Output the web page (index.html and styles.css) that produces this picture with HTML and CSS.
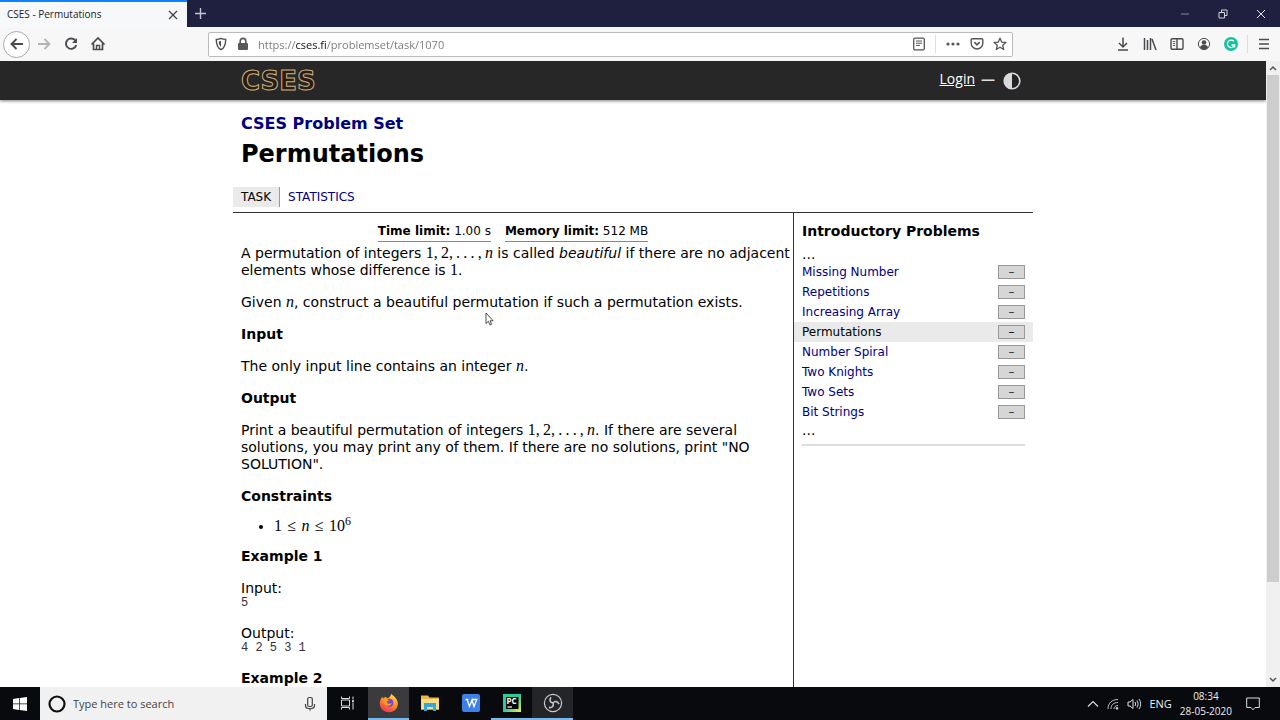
FILE: index.html
```html
<!DOCTYPE html>
<html lang="en">
<head>
    <meta charset="UTF-8">
    <meta name="viewport" content="width=device-width, initial-scale=1.0">
    <title>CSES - Permutations</title>
    <link rel="stylesheet" href="styles.css">
</head>
<body>
    <!-- Browser tabs -->
    <div class="tab-bar">
        <div class="tab">
            <span>CSES - Permutations</span>
            <button aria-label="Close tab"><svg width="10" height="10" viewBox="0 0 10 10"><path d="M1 1l8 8M9 1l-8 8" stroke="#444" stroke-width="1.3"/></svg></button>
        </div>
        <button class="new-tab" aria-label="New tab"><svg width="13" height="13" viewBox="0 0 13 13"><path d="M6.500 1v11M1 6.500h11" stroke="#c4c4d4" stroke-width="1.400"/></svg></button>
        <div class="window-buttons">
            <button aria-label="Minimize"><svg width="10" height="10" viewBox="0 0 10 10"><path d="M1 5h8" stroke="#8a8a9c"/></svg></button>
            <button aria-label="Restore"><svg width="10" height="10" viewBox="0 0 10 10" fill="none" stroke="#d5d5e0"><path d="M1 3.500h5.500v5.500H1zM3.500 3.500V1H9v5.500H6.500"/></svg></button>
            <button aria-label="Close"><svg width="10" height="10" viewBox="0 0 10 10"><path d="M1 1l8 8M9 1L1 9" stroke="#e5e5ee"/></svg></button>
        </div>
    </div>

    <!-- Browser toolbar -->
    <div class="toolbar">
        <div class="nav-buttons">
            <button class="back" aria-label="Back"><svg width="16" height="16" viewBox="0 0 16 16" fill="none" stroke="#4a4a4f" stroke-width="1.900"><path d="M14 8H3M7.500 3L2.500 8l5 5"/></svg></button>
            <button aria-label="Forward"><svg width="16" height="16" viewBox="0 0 16 16" fill="none" stroke="#b5b5b8" stroke-width="1.800"><path d="M2 8h11M8.500 3l5 5-5 5"/></svg></button>
            <button aria-label="Reload"><svg width="16" height="16" viewBox="0 0 16 16" fill="none" stroke="#4a4a4f" stroke-width="1.900"><path d="M12.500 4.800A5.200 5.200 0 1 0 13.200 9"/><path d="M14 2v5H9z" fill="#4a4a4f" stroke="none"/></svg></button>
            <button aria-label="Home"><svg width="16" height="16" viewBox="0 0 16 16" fill="none" stroke="#4a4a4f" stroke-width="1.700"><path d="M1.500 8.500L8 2l6.500 6.500M3.500 7.500v6h9v-6"/><path d="M6.500 13V9.500h3V13" stroke-width="1.400"/></svg></button>
        </div>
        <div class="url-box">
            <svg width="14" height="14" viewBox="0 0 14 14" fill="none" stroke="#4a4a4f" stroke-width="1.400"><path d="M7 1.300c1.700.9 3 1 4.700 1.100 0 4.700-.8 8.200-4.700 10.300C3.100 10.600 2.300 7.100 2.300 2.400 4 2.300 5.300 2.200 7 1.300z"/><path d="M7 4v6C5.300 8.600 4.900 7 4.800 4.600z" fill="#4a4a4f" stroke="none"/></svg>
            <svg class="lock" width="12" height="14" viewBox="0 0 12 14"><path d="M3.200 6.500V4.200a2.800 2.800 0 0 1 5.600 0v2.300" fill="none" stroke="#58585c" stroke-width="1.700"/><rect x="1" y="6" width="10" height="7" rx="1" fill="#58585c"/></svg>
            <input type="text" aria-label="Address" value="https://cses.fi/problemset/task/1070">
            <button aria-label="Reader view"><svg width="14" height="14" viewBox="0 0 14 14" fill="none" stroke="#55555a" stroke-width="1.300"><rect x="1.700" y="1.200" width="10.600" height="11.600" rx="1.300"/><path d="M4 4h6M4 6.200h6M4 8.400h4" stroke-width="1"/></svg></button>
            <span class="divider"></span>
            <button aria-label="Page actions"><svg width="16" height="14" viewBox="0 0 16 14" fill="#55555a"><circle cx="3" cy="7" r="1.600"/><circle cx="8" cy="7" r="1.600"/><circle cx="13" cy="7" r="1.600"/></svg></button>
            <button aria-label="Save to Pocket"><svg width="14" height="14" viewBox="0 0 14 14" fill="none" stroke="#55555a" stroke-width="1.400"><path d="M2.200 1.800h9.600q1 0 1 1v3.400a5.800 5.800 0 0 1-11.600 0V2.800q0-1 1-1z"/><path d="M4.300 5.200L7 7.800l2.700-2.600" stroke-width="1.600"/></svg></button>
            <button aria-label="Bookmark"><svg width="14" height="14" viewBox="0 0 14 14" fill="none" stroke="#55555a" stroke-width="1.300" stroke-linejoin="round"><path d="M7 1.200l1.700 3.900 4.200.4-3.200 2.800 1 4.200L7 10.300l-3.700 2.200 1-4.200L1.100 5.500l4.200-.4z"/></svg></button>
        </div>
        <div class="tool-buttons">
            <button aria-label="Downloads"><svg width="14" height="14" viewBox="0 0 14 14" fill="none" stroke="#4a4a4f" stroke-width="1.500"><path d="M7 .5v9M3 6l4 4 4-4M2 13h10"/></svg></button>
            <button aria-label="Library"><svg width="14" height="14" viewBox="0 0 14 14" stroke="#4a4a4f" stroke-width="1.500"><path d="M1.500 1v12M4.500 3v10M7.500 1v12M9 2l4 11"/></svg></button>
            <button aria-label="Sidebars"><svg width="14" height="14" viewBox="0 0 14 14" fill="none" stroke="#4a4a4f" stroke-width="1.400"><rect x="1" y="1.700" width="12" height="10.600" rx="1.300"/><path d="M7 2v10"/><path d="M2.800 4.500h2.400M2.800 6.500h2.400M2.800 8.500h2.400" stroke-width=".9"/></svg></button>
            <button aria-label="Account"><svg width="14" height="14" viewBox="0 0 14 14"><circle cx="7" cy="7" r="5.600" fill="none" stroke="#4a4a4f"/><circle cx="7" cy="5.500" r="2.300" fill="#4a4a4f"/><path d="M3 10.500c.3-2 2-2.500 4-2.500s3.700.5 4 2.500A5 5 0 0 1 3 10.500z" fill="#4a4a4f"/></svg></button>
            <button aria-label="Grammar check"><svg width="14" height="14" viewBox="0 0 14 14"><circle cx="7" cy="7" r="7" fill="#15c39a"/><path d="M9.800 4.300A3.700 3.700 0 1 0 10.600 8M7.500 8h3.100v2.500" fill="none" stroke="#fff" stroke-width="1.300"/></svg></button>
            <span class="divider"></span>
            <button aria-label="Menu"><svg width="14" height="14" viewBox="0 0 14 14" stroke="#4a4a4f" stroke-width="1.500"><path d="M2 2.500h10M2 7h10M2 11.500h10"/></svg></button>
        </div>
    </div>

    <div class="viewport">
        <div class="page">
            <header class="header">
                <div class="header-inner">
                    <a class="logo" href="#">CSES</a>
                    <div class="controls">
                        <a href="#">Login</a>
                        <span>—</span>
                        <button aria-label="Dark mode"><svg width="18" height="18" viewBox="0 0 18 18"><circle cx="9" cy="9" r="7.800" fill="#222" stroke="#d8dadd" stroke-width="1.600"/><path d="M9 1a8 8 0 0 0 0 16z" fill="#d8dadd"/></svg></button>
                    </div>
                </div>
            </header>

            <div class="container">
                <div class="title-block">
                    <h3><a href="#">CSES Problem Set</a></h3>
                    <h1>Permutations</h1>
                    <ul class="nav">
                        <li class="current"><a href="#">TASK</a></li>
                        <li><a href="#">STATISTICS</a></li>
                    </ul>
                </div>
                <div class="content-wrapper">
                    <main class="content">
                        <ul class="limits">
                            <li><b>Time limit:</b> 1.00 s</li>
                            <li><b>Memory limit:</b> 512 MB</li>
                        </ul>
                        <p>A permutation of integers <span class="math">1,&thinsp;2,&thinsp;.&thinsp;.&thinsp;.&thinsp;,&thinsp;<i>n</i></span> is called <em>beautiful</em> if there are no adjacent elements whose difference is <span class="math">1</span>.</p>
                        <p>Given <span class="math"><i>n</i></span>, construct a beautiful permutation if such a permutation exists.</p>
                        <h4>Input</h4>
                        <p>The only input line contains an integer <span class="math"><i>n</i></span>.</p>
                        <h4>Output</h4>
                        <p>Print a beautiful permutation of integers <span class="math">1,&thinsp;2,&thinsp;.&thinsp;.&thinsp;.&thinsp;,&thinsp;<i>n</i></span>. If there are several solutions, you may print any of them. If there are no solutions, print "NO SOLUTION".</p>
                        <h4>Constraints</h4>
                        <ul class="constraints">
                            <li><span class="math">1&emsp13;≤&emsp13;<i>n</i>&emsp13;≤&emsp13;10<sup>6</sup></span></li>
                        </ul>
                        <h4>Example 1</h4>
                        <p>Input:</p>
                        <pre>5</pre>
                        <p>Output:</p>
                        <pre>4 2 5 3 1</pre>
                        <h4>Example 2</h4>
                    </main>
                    <aside class="sidebar">
                        <h4>Introductory Problems</h4>
                        <div class="dots">...</div>
                        <ul>
                            <li><a href="#">Missing Number</a><a class="score" href="#">–</a></li>
                            <li><a href="#">Repetitions</a><a class="score" href="#">–</a></li>
                            <li><a href="#">Increasing Array</a><a class="score" href="#">–</a></li>
                            <li class="current"><a href="#">Permutations</a><a class="score" href="#">–</a></li>
                            <li><a href="#">Number Spiral</a><a class="score" href="#">–</a></li>
                            <li><a href="#">Two Knights</a><a class="score" href="#">–</a></li>
                            <li><a href="#">Two Sets</a><a class="score" href="#">–</a></li>
                            <li><a href="#">Bit Strings</a><a class="score" href="#">–</a></li>
                        </ul>
                        <div class="dots">...</div>
                        <hr>
                    </aside>
                </div>
            </div>
        </div>
        <div class="scrollbar">
            <svg width="14" height="14" viewBox="0 0 14 14"><path d="M4 9l3-3 3 3" fill="none" stroke="#555" stroke-width="1.500"/></svg>
            <div class="thumb"></div>
            <svg width="14" height="14" viewBox="0 0 14 14"><path d="M4 5l3 3 3-3" fill="none" stroke="#555" stroke-width="1.500"/></svg>
        </div>
        <svg class="cursor" width="9" height="14" viewBox="0 0 9 14"><path d="M1 1v10.500l2.400-2.200 1.600 3.700 1.600-.7L5 8.800h3.200z" fill="#fff" stroke="#222" stroke-width=".8"/></svg>
    </div>

    <!-- Windows taskbar -->
    <div class="taskbar">
        <button class="start" aria-label="Start"><svg width="14" height="14" viewBox="0 0 14 14" fill="#fff"><path d="M0 2l6-.9v5.500H0zM6.700 1L14 0v6.600H6.700zM0 7.300h6v5.600L0 12zM6.700 7.300H14V14l-7.300-1z"/></svg></button>
        <div class="search">
            <svg width="18" height="18" viewBox="0 0 18 18"><circle cx="9" cy="9" r="7.500" fill="none" stroke="#111" stroke-width="2.200"/></svg>
            <input type="text" aria-label="Search" placeholder="Type here to search">
            <svg width="12" height="16" viewBox="0 0 12 16" fill="none" stroke="#444" stroke-width="1.200"><rect x="3.700" y="1.500" width="4.600" height="9" rx="1.500"/><path d="M1.500 8v1.500q0 3 3 3h3q3 0 3-3V8M6 12.500v2.200"/></svg>
        </div>
        <button class="app" aria-label="Task view"><svg width="16" height="16" viewBox="0 0 16 16" fill="none" stroke="#ddd"><path d="M1.500 5h8v6h-8zM1.500 1.500v2h8v-2M1.500 14.500v-2h8v2M13 1.500v3M13 8v6.500"/><path d="M12 6.200h2" stroke-width="2"/></svg></button>
        <button class="app active" aria-label="Firefox"><svg width="20" height="20" viewBox="0 0 20 20"><defs><linearGradient id="fox" x1=".8" y1="0" x2=".3" y2="1"><stop offset="0" stop-color="#ffe14a"/><stop offset=".5" stop-color="#ff8a1e"/><stop offset="1" stop-color="#f2335c"/></linearGradient></defs><path d="M12.500.8c1 2 4.500 3 6 7.500 1.600 5.800-2.400 11-8.300 11S.8 15 .8 10.500C.8 7.500 2 5.500 3.400 3.800l.5 1.800C5 4.500 6 4 7.300 4L8 5.500c2-.5 3.400-2 4.500-4.700z" fill="url(#fox)"/><circle cx="10.300" cy="9.800" r="4" fill="#7046df"/><path d="M5 6c2-.8 4 0 5.500 1.800-1.500 0-2.500.5-2.800 1.700 1.800 1.800 3.500 1.200 5 .5-.5 3.500-6.500 4-8 0C4 8.500 4.200 7 5 6z" fill="#ff9a22"/></svg></button>
        <button class="app" aria-label="File Explorer"><svg width="20" height="18" viewBox="0 0 20 18"><path d="M1 1.500h7l1.500 2H19v12H1z" fill="#e8b64a"/><path d="M1 5h18v10.500H1z" fill="#fbdc86"/><path d="M4 17V9h12v8h-3v-4H7v4z" fill="#3aa6d8"/></svg></button>
        <button class="app" aria-label="WPS Writer"><svg width="18" height="18" viewBox="0 0 18 18"><rect width="18" height="18" rx="2" fill="#3c80e8"/><path d="M3.500 5.500h3M5 5.500l2.500 7L10 6l2 6.500 2.800-7H9.500" fill="none" stroke="#fff" stroke-width="1.300"/></svg></button>
        <button class="app open" aria-label="PyCharm"><svg width="18" height="18" viewBox="0 0 18 18"><defs><linearGradient id="pc" x1="0" y1="0" x2="1" y2="1"><stop offset="0" stop-color="#21d789"/><stop offset=".5" stop-color="#2ec7a0"/><stop offset="1" stop-color="#f5ee50"/></linearGradient></defs><rect width="18" height="18" fill="url(#pc)"/><rect x="3" y="3" width="12.500" height="12" fill="#080808"/><text class="pc-text" x="3.500" y="10">PC</text><path d="M4.500 13h4.500" stroke="#fff" stroke-width="1.200"/></svg></button>
        <button class="app open dim" aria-label="OBS Studio"><svg width="20" height="20" viewBox="0 0 20 20" fill="none" stroke="#c8c8cc"><circle cx="10" cy="10" r="8.600" stroke-width="1.200"/><path d="M10 10c-3-.5-4-3-2-5.800" stroke-width="1.600"/><path d="M10 10c-3-.5-4-3-2-5.800" stroke-width="1.600" transform="rotate(120 10 10)"/><path d="M10 10c-3-.5-4-3-2-5.800" stroke-width="1.600" transform="rotate(240 10 10)"/></svg></button>
        <div class="tray">
            <svg width="12" height="12" viewBox="0 0 12 12"><path d="M1 8.500l5-5 5 5" fill="none" stroke="#ddd" stroke-width="1.200"/></svg>
            <svg width="12" height="12" viewBox="0 0 12 12" fill="none" stroke="#bbb"><path d="M1 11C1 5 5 1.500 11 1.500M4 11c0-4 2.500-6.500 7-6.500M7 11c0-2 1.500-3.500 4-3.500"/><circle cx="10" cy="10.300" r="1" fill="#ddd"/></svg>
            <svg width="14" height="12" viewBox="0 0 14 12" fill="none" stroke="#ddd"><path d="M1 4h2l3-2.500v9L3 8H1zM8 4q1.500 2 0 4M10 2.500q2.500 3.500 0 7M12 1q3.500 5 0 10"/></svg>
            <span>ENG</span>
            <div class="clock">08:34<br>28-05-2020</div>
            <svg class="notify" width="14" height="14" viewBox="0 0 14 14" fill="none" stroke="#ddd"><path d="M.7 1h12.600v9.500H9L7 12.800 5 10.500H.7z"/></svg>
        </div>
    </div>
</body>
</html>
```
FILE: styles.css
```css
* {
    box-sizing: border-box;
}

body {
    margin: 0;
    height: 100vh;
    display: flex;
    flex-direction: column;
    overflow: hidden;
    font-family: "DejaVu Sans", Verdana, sans-serif;
    font-size: 14px;
    line-height: 17px;
    color: #000;
    background: #fff;
}

button {
    display: flex;
    align-items: center;
    justify-content: center;
    padding: 0;
    border: none;
    background: none;
}

svg {
    display: block;
    flex-shrink: 0;
}

ul {
    list-style: none;
    margin: 0;
    padding: 0;
}

a {
    color: #000080;
    text-decoration: none;
}

/* browser */
.tab-bar {
    display: flex;
    height: 27px;
    background: #1f1f40;
    font-family: "Open Sans", sans-serif;
    font-size: 10px;
}

.tab {
    display: flex;
    align-items: center;
    justify-content: space-between;
    width: 187px;
    padding: 0 9px 0 7px;
    border-top: 2px solid #0a84ff;
    background: #f7f8fa;
    color: #222;
}

.new-tab {
    width: 27px;
}

.window-buttons {
    display: flex;
    margin-left: auto;
}

.window-buttons button {
    width: 38px;
}

.toolbar {
    display: flex;
    align-items: center;
    height: 34px;
    padding: 0 9px 0 3px;
    background: #f7f7f8;
}

.nav-buttons {
    display: flex;
    align-items: center;
    width: 205px;
}

.nav-buttons button {
    width: 27px;
    height: 27px;
}

.nav-buttons .back {
    border: 1px solid #aaa;
    border-radius: 50%;
    background: #fff;
}

.url-box {
    display: flex;
    align-items: center;
    gap: 9px;
    flex: 1;
    height: 25px;
    padding: 0 5px;
    border: 1px solid #bbb;
    border-radius: 2px;
    background: #fff;
}

.url-box input {
    flex: 1;
    min-width: 0;
    padding: 0;
    border: none;
    outline: none;
    font-family: "Open Sans", sans-serif;
    font-size: 11px;
    color: transparent;
    background: linear-gradient(to right, #777 38px, #111 38px, #111 68px, #777 68px);
    -webkit-background-clip: text;
    background-clip: text;
}

.divider {
    width: 1px;
    height: 18px;
    background: #ddd;
}

.tool-buttons {
    display: flex;
    align-items: center;
    gap: 13px;
    padding-left: 103px;
}

.tool-buttons .divider {
    margin: 0 -4px;
}

.viewport {
    position: relative;
    display: flex;
    flex: 1;
    min-height: 0;
}

.page {
    flex: 1;
    overflow: hidden;
}

.scrollbar {
    display: flex;
    flex-direction: column;
    width: 14px;
    background: #f0f0f0;
}

.thumb {
    height: 81%;
    margin: 0 1px auto;
    background: #cdcdcd;
}

.cursor {
    position: absolute;
    left: 485px;
    top: 251px;
}

/* site header */
.header {
    height: 39px;
    background: #272727;
    box-shadow: 0 1px 3px rgba(0, 0, 0, 0.5);
}

.header-inner {
    display: flex;
    align-items: center;
    justify-content: space-between;
    max-width: 800px;
    height: 100%;
    margin: 0 auto;
    padding: 0 12px 0 8px;
}

.logo {
    font-size: 26px;
    font-weight: bold;
    line-height: 26px;
    color: #2c1c10;
    -webkit-text-stroke: 1px #c9b083;
}

.controls {
    display: flex;
    align-items: center;
    gap: 6px;
    font-family: "Open Sans", sans-serif;
    color: #ddd;
}

.controls a,
.controls span {
    padding-bottom: 4px;
}

.controls a {
    color: #fff;
    text-decoration: underline;
}

.controls span {
    font-weight: bold;
}

.controls button {
    margin-left: 2px;
}

/* task page */
.container {
    max-width: 800px;
    margin: 0 auto;
}

.title-block {
    padding-top: 15px;
    border-bottom: 1px solid #333;
}

.title-block h3 {
    margin: 0;
    padding: 0 8px;
    font-size: 16px;
    line-height: 18px;
}

.title-block h1 {
    margin: 6px 0 18px;
    padding: 0 8px;
    font-size: 24px;
    line-height: 30px;
}

.nav {
    display: flex;
    padding-bottom: 5px;
    font-size: 12px;
    line-height: 16px;
}

.nav li {
    padding: 2px 8px;
}

.nav .current {
    background: #eaeaea;
    border-right: 1px solid #999;
}

.current a {
    color: #000;
}

.content-wrapper {
    display: flex;
}

.content {
    flex: 1;
    padding: 10px 0 10px 8px;
}

.content p,
.content h4 {
    margin: 0 0 15px;
    font-size: 14px;
}

.limits {
    display: flex;
    justify-content: center;
    gap: 14px;
    margin: 0 8px 3px 0;
    font-size: 12px;
    line-height: 16px;
}

.limits li {
    padding-bottom: 2px;
    border-bottom: 1px solid #888;
}

/* formulas must not stretch the text lines */
.math {
    font-family: "Liberation Serif", serif;
    font-size: 16px;
    line-height: 0;
    white-space: nowrap;
}

.math sup {
    font-size: 12px;
}

.constraints {
    list-style: disc;
    margin: -2px 0 13px;
    padding-left: 33px;
}

.content pre {
    margin: -15px 0 15px;
    font-family: "Liberation Mono", monospace;
    font-size: 12px;
    line-height: 13px;
    color: #333;
}

.sidebar {
    width: 240px;
    min-height: 480px;
    padding-top: 10px;
    border-left: 1px solid #333;
    font-size: 12px;
}

.sidebar h4 {
    margin: 0 8px 6px;
    font-size: 14px;
}

.sidebar li {
    display: flex;
    align-items: center;
    justify-content: space-between;
    height: 20px;
    padding: 0 8px;
}

.sidebar .current {
    background: #eaeaea;
}

.dots {
    height: 16px;
    padding: 0 8px;
    font-size: 14px;
}

.score {
    width: 27px;
    height: 14px;
    border: 1px solid #999;
    background: #d6d6d6;
    color: #333;
    line-height: 12px;
    text-align: center;
}

.sidebar hr {
    margin: 6px 8px;
    border: none;
    border-top: 2px solid #ddd;
}

/* taskbar */
.taskbar {
    display: flex;
    height: 33px;
    background: #090a0e;
    color: #eee;
    font-family: "Open Sans", sans-serif;
    font-size: 11px;
}

.start {
    width: 40px;
}

.search {
    display: flex;
    align-items: center;
    gap: 7px;
    width: 287px;
    padding: 0 11px 0 8px;
    background: #f1f1f1;
}

.search input {
    flex: 1;
    min-width: 0;
    padding: 0;
    border: none;
    background: none;
    font: inherit;
}

.search input::placeholder {
    color: #444;
}

.app {
    width: 41px;
    border-bottom: 2px solid transparent;
}

.app.active {
    background: #3b3b3e;
}

.app.active,
.app.open {
    border-bottom-color: #76b9ed;
}

.app.dim {
    background: #242529;
}

.pc-text {
    font-family: "Open Sans", sans-serif;
    font-size: 8px;
    font-weight: bold;
    fill: #fff;
}

.tray {
    display: flex;
    align-items: center;
    gap: 8px;
    margin-left: auto;
    padding-right: 20px;
}

.clock {
    font-size: 10px;
    line-height: 15px;
    text-align: center;
}

.notify {
    margin-left: 6px;
}
```
